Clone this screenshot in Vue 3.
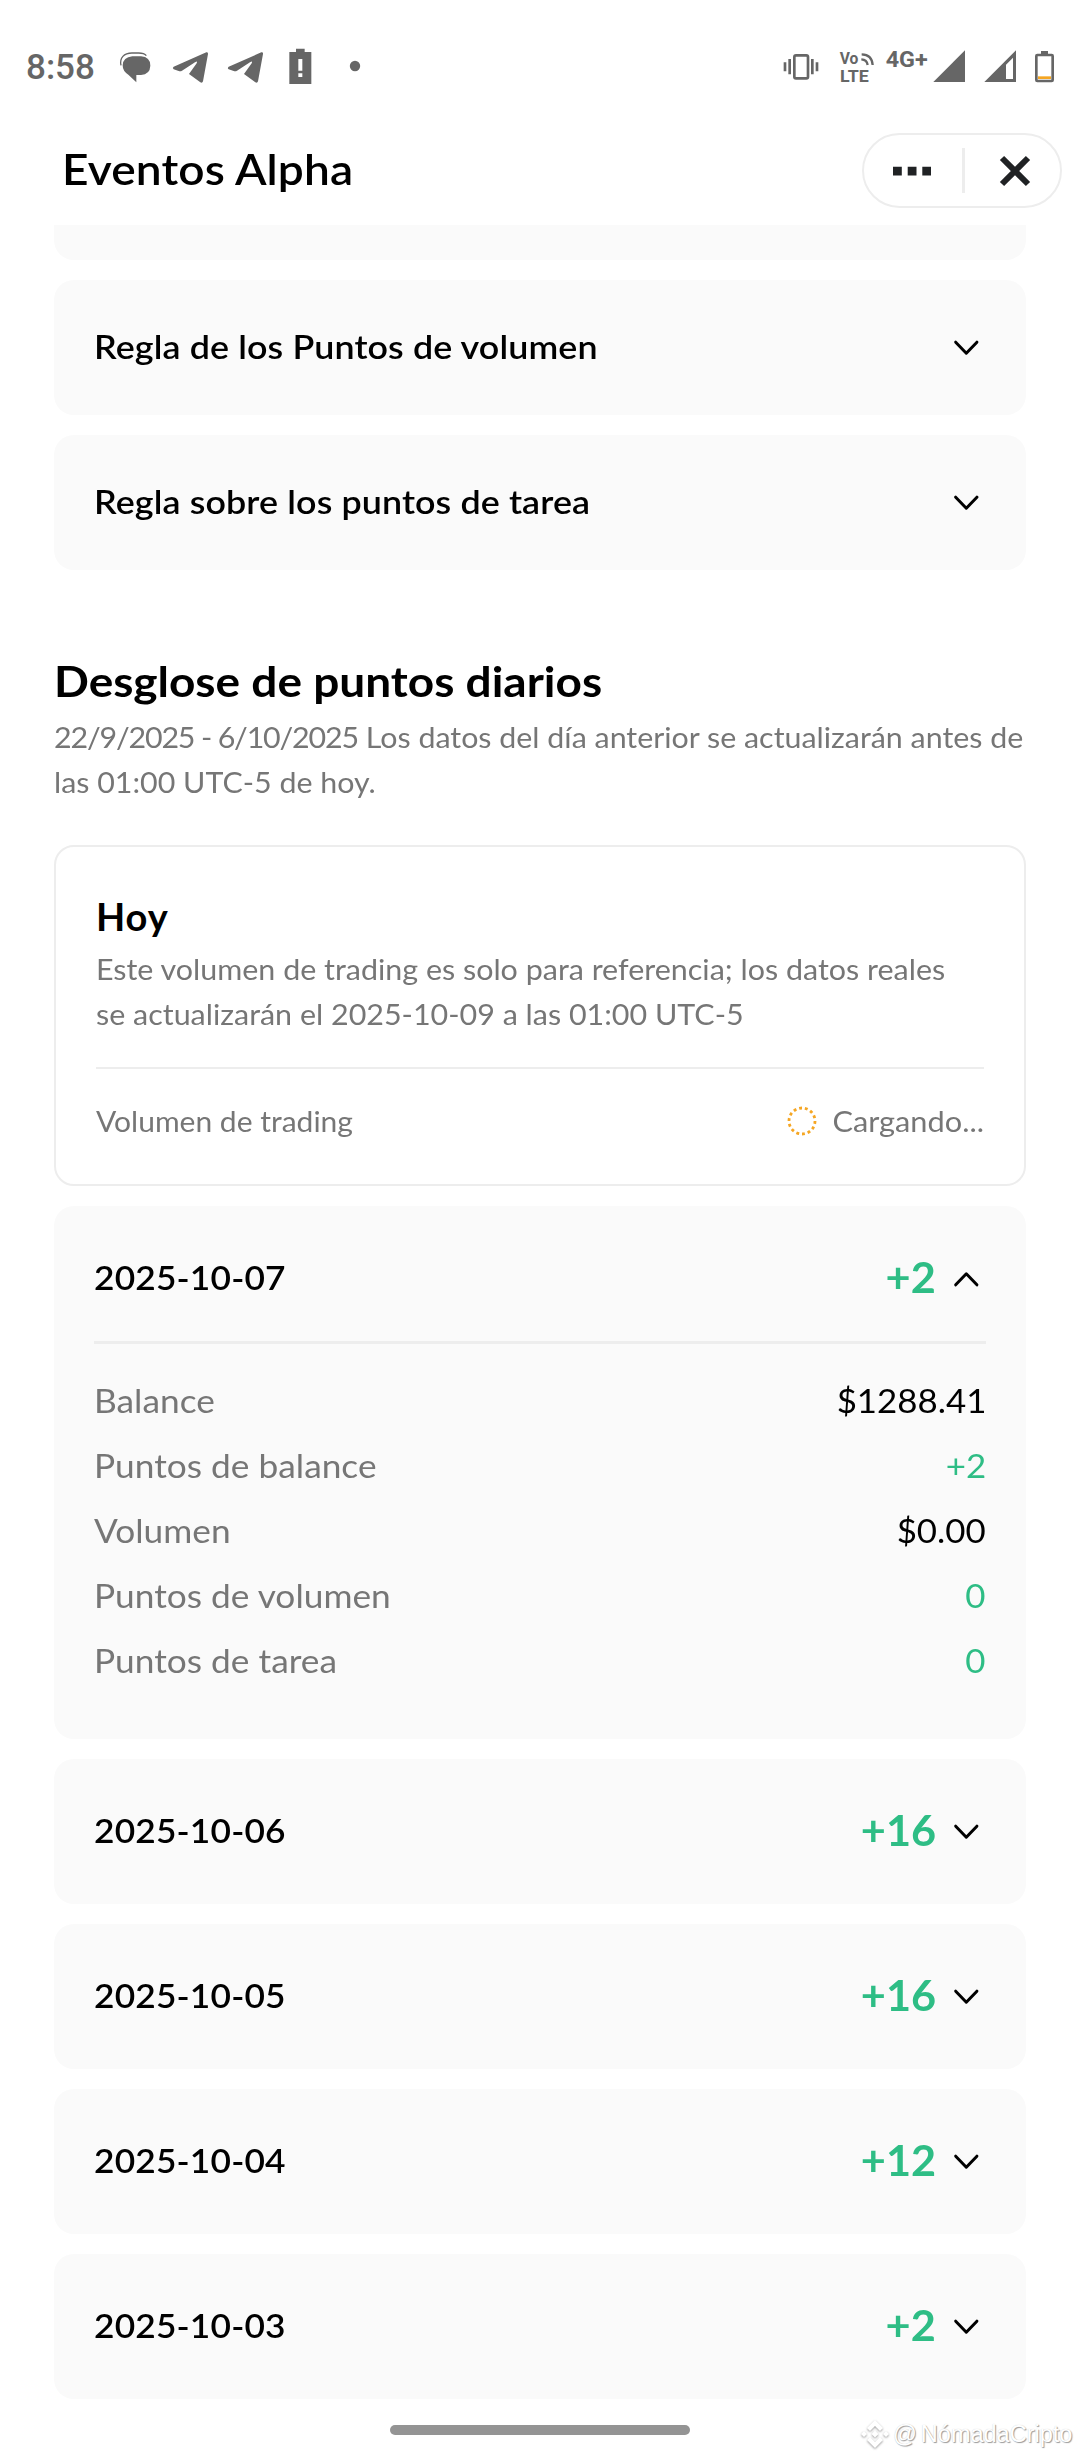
<script setup>
const rules = ['Regla de los Puntos de volumen', 'Regla sobre los puntos de tarea']
const days = [
  {
    date: '2025-10-07',
    points: '+2',
    rows: [
      { label: 'Balance', value: '$1288.41' },
      { label: 'Puntos de balance', value: '+2', green: true },
      { label: 'Volumen', value: '$0.00' },
      { label: 'Puntos de volumen', value: '0', green: true },
      { label: 'Puntos de tarea', value: '0', green: true }
    ]
  },
  { date: '2025-10-06', points: '+16' },
  { date: '2025-10-05', points: '+16' },
  { date: '2025-10-04', points: '+12' },
  { date: '2025-10-03', points: '+2' }
]
</script>

<template>
  <div class="app">
    <header class="status">
      <span class="clock">8:58</span>
      <svg class="g chat" viewBox="357 48 99 120" width="33" height="40">
        <path d="M363 106C358 84 372 69 396 69H416C427 69 435 72 439 77" fill="none" stroke="#666" stroke-width="4" />
        <path d="M397 79H423Q451 81 451 107Q450 133 423 135H409V157L385 134Q368 124 368 106Q369 82 397 79Z" />
      </svg>
      <svg v-for="n in 2" :key="n" class="g plane" viewBox="516 48 111 120" width="37" height="40">
        <path d="M521 110L619 67Q625 66 624 72L609 154Q607 160 601 157L567 132L590 100Q594 91 585 97L546 122Q541 125 536 123L521 118Q516 114 521 110Z" />
      </svg>
      <svg class="g batt" viewBox="864 48 75 120" width="25" height="40">
        <path fill-rule="evenodd" d="M888 56H914V66H934V162H868V66H888ZM895 87H907V122H895ZM895 130H907V141H895Z" />
      </svg>
      <svg class="g dot" viewBox="1047 48 36 120" width="12" height="40"><circle cx="1065" cy="108" r="15.5" /></svg>
      <span class="grow"></span>
      <svg class="g vib" viewBox="129 48 108 120" width="36" height="40">
        <rect x="163" y="76" width="41" height="69" rx="5" fill="none" stroke="#666" stroke-width="8" />
        <path d="M131 97h8v27h-8zM145 87h8v46h-8zM213 87h8v46h-8zM227 97h8v27h-8z" />
      </svg>
      <svg class="g volte" viewBox="297 48 108 120" width="36" height="40">
        <text x="299" y="102" font-size="48" textLength="56" lengthAdjust="spacingAndGlyphs">Vo</text>
        <text x="300" y="155" font-size="52" textLength="86" lengthAdjust="spacingAndGlyphs">LTE</text>
        <path d="M365 73Q396 74 398 105M364 88Q381 89 383 105" fill="none" stroke="#666" stroke-width="7" />
      </svg>
      <svg class="g net" viewBox="435 48 129 120" width="43" height="40">
        <text x="437" y="110" font-size="67" textLength="126" lengthAdjust="spacingAndGlyphs">4G+</text>
      </svg>
      <svg class="g sig1" viewBox="579 48 99 120" width="33" height="40"><path d="M675 61V156H580Z" /></svg>
      <svg class="g sig2" viewBox="732 48 99 120" width="33" height="40">
        <path fill-rule="evenodd" d="M828 61V156H733ZM819 83L798 104V147H819Z" />
      </svg>
      <svg class="g low" viewBox="882 48 63 120" width="21" height="40">
        <path d="M903 63H924V72H903Z" />
        <rect x="889" y="75" width="49" height="78" rx="3" fill="none" stroke="#666" stroke-width="8" />
        <path d="M894 139H933V147H894Z" fill="#f5a623" />
      </svg>
    </header>

    <div class="titlebar">
      <h1>Eventos Alpha</h1>
      <div class="pill">
        <svg width="38" height="10" viewBox="0 0 38 10"><path d="M0 .7h8.8v8.8H0zM14.7 .7h8.8v8.8h-8.8zM29.3 .7h8.8v8.8h-8.8z" fill="#202224" /></svg>
        <i class="sep"></i>
        <svg class="x" width="32" height="32" viewBox="0 0 32 32"><path d="M3 3L29 29M29 3L3 29" stroke="#202224" stroke-width="6" /></svg>
      </div>
    </div>

    <main>
      <div class="cut"></div>
      <div v-for="r in rules" :key="r" class="card rule">
        <span>{{ r }}</span>
        <svg class="chev" viewBox="0 0 40 40"><path d="M9.7 14.2L20.3 25.2L30.9 14.2" /></svg>
      </div>

      <h2>Desglose de puntos diarios</h2>
      <p class="desc"><span class="range">22/9/2025 - 6/10/2025</span> Los datos del día anterior se actualizarán antes de <br>las 01:00 UTC-5 de hoy.</p>

      <section class="today">
        <h3>Hoy</h3>
        <p class="desc">Este volumen de trading es solo para referencia; los datos reales<br>se actualizarán el 2025-10-09 a las 01:00 UTC-5</p>
        <div class="vol">
          <span class="vl">Volumen de trading</span>
          <span class="load">
            <svg width="30" height="30" viewBox="0 0 30 30"><circle cx="15" cy="15" r="13" pathLength="140" /></svg>
            <span>Cargando...</span>
          </span>
        </div>
      </section>

      <section v-for="d in days" :key="d.date" class="card day">
        <div class="head">
          <span class="date">{{ d.date }}</span>
          <b>{{ d.points }}</b>
          <svg class="chev" :class="{ up: d.rows }" viewBox="0 0 40 40"><path d="M9.7 14.2L20.3 25.2L30.9 14.2" /></svg>
        </div>
        <div v-if="d.rows" class="rows">
          <div v-for="r in d.rows" :key="r.label" class="row">
            <span class="label">{{ r.label }}</span><span class="val" :class="{ green: r.green }">{{ r.value }}</span>
          </div>
        </div>
      </section>
    </main>

    <div class="home"></div>
    <div class="mark">
      <svg width="30" height="30" viewBox="0 0 30 30">
        <path d="M15 1L23 9L20 12L15 7L10 12L7 9ZM15 29L23 21L20 18L15 23L10 18L7 21ZM4 12L7 15L4 18L1 15ZM26 12L29 15L26 18L23 15ZM15 11.5L18.5 15L15 18.5L11.5 15Z" />
      </svg>
      <span class="at">@</span><span>NómadaCripto</span>
    </div>
  </div>
</template>

<style>
body { background: #fff; }
</style>

<style scoped>
.app { position: relative; width: 1080px; height: 2460px; overflow: hidden; background: #fff; color: #000; font-family: Lato, "Open Sans", sans-serif; }
h1, h2, h3, p { margin: 0; }
svg { display: block; flex: none; }

.status { display: flex; height: 118px; padding: 46px 25px 0 26px; box-sizing: border-box; }
.clock { width: 93px; font: 500 35px/43px Roboto, sans-serif; color: #666; }
.grow { flex: 1; }
.g { fill: #666; }
.g text { font-family: Roboto, sans-serif; font-weight: 700; }
.plane { margin-left: 20px; }
.plane + .plane { margin-left: 18px; }
.batt { margin-left: 24px; }
.dot { margin-left: 36px; }
.volte { margin-left: 20px; }
.net { margin-left: 10px; }
.sig1 { margin-left: 5px; }
.sig2 { margin-left: 18px; }
.low { margin-left: 17px; }

.titlebar { display: flex; align-items: flex-start; justify-content: space-between; height: 107px; padding: 0 18px 0 62px; box-sizing: border-box; }
.pill { display: flex; align-items: center; width: 200px; height: 75px; margin-top: 15px; padding-left: 29px; box-sizing: border-box; border: 2px solid #ededed; border-radius: 38px; }
.sep { width: 3px; height: 45px; margin-left: 31px; background: #ededed; }
.x { margin-left: 34px; }

/* Lato is narrower than the brand face, so text runs are widened. */
h1, h2, .rule span, .desc, .vl, .date, .label { transform-origin: 0 50%; }
.load span, b, .val { transform-origin: 100% 50%; }

h1 { margin-top: 21px; font-size: 42px; line-height: 60px; font-weight: 600; letter-spacing: .1px; transform: scaleX(1.097); }

main { padding: 0 54px; }
.cut { height: 35px; background: #fafafa; border-radius: 0 0 20px 20px; }
.card { margin-top: 20px; background: #fafafa; border-radius: 20px; }
.rule { display: flex; align-items: center; justify-content: space-between; height: 135px; padding: 0 40px; font-size: 32px; font-weight: 600; box-sizing: border-box; }
.rule span { padding-bottom: 2px; letter-spacing: .1px; transform: scaleX(1.12); }
.chev { width: 40px; height: 40px; fill: none; stroke: #000; stroke-width: 3; stroke-linecap: round; stroke-linejoin: round; }
.up { transform: scaleY(-1); }

h2 { width: 600px; margin-top: 86px; font-size: 42px; line-height: 50px; font-weight: 700; transform: scaleX(1.095); }
.desc { width: 900px; margin-top: 8px; font-size: 29px; line-height: 45px; color: #767676; white-space: nowrap; transform: scaleX(1.048); }
.range { letter-spacing: -1.12px; }

.today { height: 341px; margin-top: 41px; padding: 46px 40px 0; border: 2px solid #ededed; border-radius: 20px; box-sizing: border-box; }
h3 { font-size: 38px; line-height: 46px; font-weight: 700; letter-spacing: .9px; }
.today .desc { width: 840px; margin-top: 7px; transform: scaleX(1.05); }
.vol { display: flex; justify-content: space-between; align-items: center; height: 105px; margin-top: 31px; border-top: 2px solid #ededed; font-size: 29px; color: #767676; box-sizing: border-box; }
.vl { transform: scaleX(1.035); }
.load { display: flex; align-items: center; gap: 24px; }
.load span { transform: scaleX(1.06); }
.load circle { fill: none; stroke: #f5a623; stroke-width: 2.8; stroke-dasharray: 5 5; }

.head { display: flex; align-items: center; height: 145px; padding: 0 40px; }
.date { padding-bottom: 2px; margin-right: auto; font-size: 32px; font-weight: 600; letter-spacing: .15px; transform: scaleX(1.103); }
b { padding-bottom: 3px; margin-right: 10px; font-size: 42px; font-weight: 700; transform: scaleX(1.03); }
b, .green { color: #2ebd85; }
.rows { margin: -10px 40px 0; padding: 24px 0 46px; border-top: 3px solid #ededed; }
.row { display: flex; justify-content: space-between; font-size: 32px; line-height: 65px; }
.label { color: #767676; transform: scaleX(1.103); }
.val { transform: scaleX(1.09); }

.home { position: absolute; left: 390px; top: 2425px; width: 300px; height: 10px; border-radius: 5px; background: #949494; }
.mark { position: absolute; left: 860px; top: 2419px; display: flex; align-items: center; height: 30px; font: 23.5px/30px "Liberation Sans", sans-serif; color: #fff; text-shadow: 1px 1px 1px #999, 0 0 1px #ccc; }
.mark svg { fill: #fff; filter: drop-shadow(0 1px 1px #999); }
.at { margin: 0 4px 0 3px; }
</style>
